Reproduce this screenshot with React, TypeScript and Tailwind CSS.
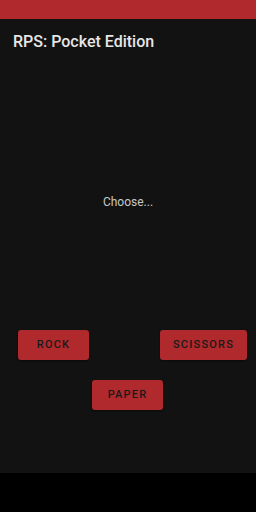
export default function App() {
  return (
    <div className="flex h-[512px] w-[256px] flex-col bg-black font-['Roboto',sans-serif]">
      <div className="h-[19px] bg-[#b0292c]" />
      <div className="flex h-[454px] flex-col bg-[#121212]">
        <div className="px-[13px] pt-[13px] text-[16px] font-medium leading-[20px] text-[#e6e6e6]">RPS: Pocket Edition</div>
        <div className="mt-[143px] text-center text-[12px] leading-[14px] text-[#c8c8c8]">Choose...</div>
        <div className="mt-[121px] flex justify-between pl-[18px] pr-[9px]">
          <button className="h-[30px] w-[71px] rounded-[3px] bg-[#b0292c] text-[11px] font-medium tracking-[1.2px] text-[#1a1a1a] shadow-[0_1px_2px_rgba(0,0,0,0.5)]">ROCK</button>
          <button className="h-[30px] w-[87px] rounded-[3px] bg-[#b0292c] text-[11px] font-medium tracking-[1.2px] text-[#1a1a1a] shadow-[0_1px_2px_rgba(0,0,0,0.5)]">SCISSORS</button>
        </div>
        <div className="mt-[20px] flex justify-center pr-px">
          <button className="h-[30px] w-[71px] rounded-[3px] bg-[#b0292c] text-[11px] font-medium tracking-[1.2px] text-[#1a1a1a] shadow-[0_1px_2px_rgba(0,0,0,0.5)]">PAPER</button>
        </div>
      </div>
      <div className="flex-1 bg-black" />
    </div>
  );
}
